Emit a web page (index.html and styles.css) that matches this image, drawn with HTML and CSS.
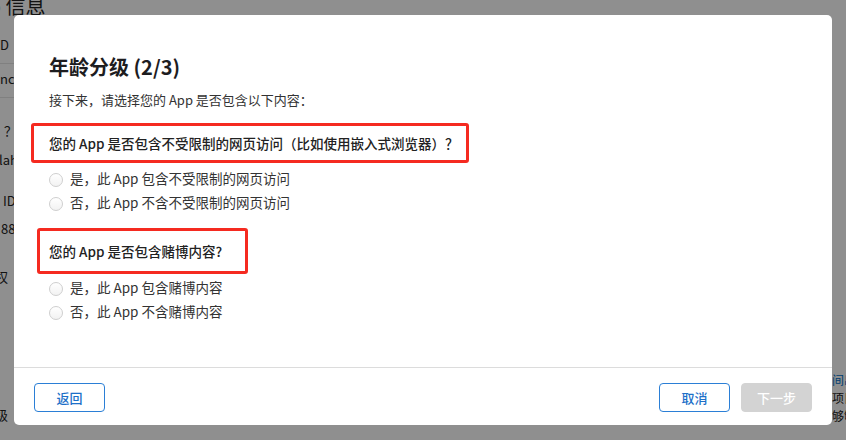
FILE: index.html
```html
<!DOCTYPE html>
<html lang="zh-CN">
<head>
<meta charset="UTF-8">
<meta name="viewport" content="width=device-width, initial-scale=1.0">
<title>年龄分级</title>
<link rel="stylesheet" href="styles.css">
</head>
<body>
<div class="page">
    <div class="page-left">
        <div class="page-title"><span class="cut">App </span>信息</div>
        <div class="page-row row-a">D</div>
        <div class="page-row row-b">nc</div>
        <div class="page-item item-q">？</div>
        <div class="page-item item-lah">lah</div>
        <div class="page-item item-id">ID</div>
        <div class="page-item item-num">88</div>
        <div class="page-item item-right">权</div>
        <div class="page-item item-level">级</div>
    </div>
    <div class="page-right">
        <div class="page-link">间出</div>
        <div class="page-note">项目</div>
        <div class="page-note">够够</div>
    </div>
</div>

<div class="overlay">
    <div class="modal">
        <div class="modal-body">
            <h2 class="modal-title">年龄分级 (2/3)</h2>
            <p class="modal-intro">接下来，请选择您的 App 是否包含以下内容：</p>

            <div class="question question-web">您的 App 是否包含不受限制的网页访问（比如使用嵌入式浏览器）？</div>
            <label class="option option-first"><input type="radio" name="web" class="radio">是，此 App 包含不受限制的网页访问</label>
            <label class="option"><input type="radio" name="web" class="radio">否，此 App 不含不受限制的网页访问</label>

            <div class="question question-gamble">您的 App 是否包含赌博内容?</div>
            <label class="option option-after"><input type="radio" name="gamble" class="radio">是，此 App 包含赌博内容</label>
            <label class="option"><input type="radio" name="gamble" class="radio">否，此 App 不含赌博内容</label>
        </div>
        <div class="modal-footer">
            <button class="btn btn-outline">返回</button>
            <div class="footer-right">
                <button class="btn btn-outline">取消</button>
                <button class="btn btn-disabled" disabled>下一步</button>
            </div>
        </div>
    </div>
</div>
</body>
</html>
```

FILE: styles.css
```css
body {
    font-family: "Noto Sans CJK SC", "Noto Sans", sans-serif;
    margin: 0;
    padding: 0;
    background: #fff;
    color: #222;
    overflow: hidden;
}

/* page behind the dialog */
.page {
    display: flex;
    justify-content: space-between;
    height: 440px;
    font-size: 13px;
    line-height: 20px;
}
.page-left {
    width: 60px;
    overflow: hidden;
    white-space: nowrap;
}
.page-title {
    font-size: 20px;
    line-height: 28px;
    margin-top: -8px;
    margin-left: -36px;
}
.page-row {
    border-bottom: 1px solid #e4e4e4;
    width: 60px;
}
.row-a {
    margin-top: 15px;
    padding-bottom: 8px;
}
.row-b {
    padding-top: 5px;
    padding-bottom: 8px;
}
.page-item {
    padding-left: 1px;
}
.item-q { margin-top: 23px; padding-left: 4px; }
.item-lah { margin-top: 9px; margin-left: -2px; }
.item-id { margin-top: 21px; padding-left: 3px; }
.item-num { margin-top: 8px; }
.item-right { margin-top: 28px; margin-left: -6px; }
.item-level { margin-top: 118px; margin-left: -6px; }

.page-right {
    width: 14px;
    overflow: hidden;
    white-space: nowrap;
    padding-top: 371px;
    font-size: 12px;
    line-height: 18px;
}
.page-link {
    color: #0070c9;
}

.overlay {
    position: fixed;
    inset: 0;
    background: rgba(0, 0, 0, 0.44);
}

/* dialog */
.modal {
    position: absolute;
    left: 14px;
    top: 15px;
    width: 818px;
    height: 410px;
    background: #fff;
    border-radius: 5px;
    display: flex;
    flex-direction: column;
}
.modal-body {
    flex: 1;
    padding: 38px 35px 0;
}
.modal-title {
    margin: 0;
    font-size: 20px;
    line-height: 28px;
    font-weight: 700;
    color: #1d1d1f;
}
.modal-intro {
    margin: 9px 0 0;
    font-size: 13px;
    line-height: 20px;
    color: #333;
}
.question {
    display: inline-block;
    border: 3px solid #f52a20;
    border-radius: 3px;
    font-size: 13.5px;
    line-height: 20px;
    font-weight: 500;
    color: #222;
}
.question-web {
    margin: 13px 0 0 -18px;
    padding: 7px 8px 7px 15px;
}
.question-gamble {
    margin: 14px 0 0 -12px;
    padding: 10px 23px 10px 9px;
}
.option {
    display: flex;
    align-items: center;
    height: 24px;
    font-size: 13.5px;
    color: #333;
}
.option-first {
    margin-top: 3px;
}
.option-after {
    margin-top: 1px;
}
.radio {
    appearance: none;
    width: 14px;
    height: 14px;
    margin: 3px 7px 0 0;
    border: 1px solid #cfcfcf;
    border-radius: 50%;
    background: linear-gradient(#fff, #f2f2f2);
    box-sizing: border-box;
}

.modal-footer {
    height: 58px;
    border-top: 1px solid #dcdcdc;
    display: flex;
    justify-content: space-between;
    padding: 15px 20px 0;
    box-sizing: border-box;
}
.footer-right {
    display: flex;
    gap: 11px;
}
.btn {
    width: 71px;
    height: 29px;
    font-family: inherit;
    font-size: 13px;
    font-weight: 500;
    border-radius: 4px;
    padding: 0;
}
.btn-outline {
    background: #fff;
    border: 1px solid #2b7fd6;
    color: #1d70c8;
}
.btn-disabled {
    background: #d3d3d3;
    border: 1px solid #d3d3d3;
    color: #fff;
}
```
